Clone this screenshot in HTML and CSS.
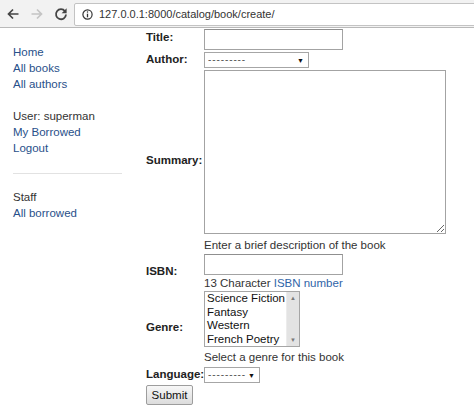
FILE: index.html
```html
<!DOCTYPE html>
<html lang="en">
<head>
<meta charset="utf-8">
<title>Create book</title>
<link rel="stylesheet" href="styles.css">
</head>
<body>
<div class="toolbar">
  <div class="nav-buttons">
    <svg class="nav-icon" width="14" height="14" viewBox="0 0 14 14"><path d="M12.5 7H2.5M7 2.5L2.5 7 7 11.5" fill="none" stroke="#444" stroke-width="1.7"/></svg>
    <svg class="nav-icon" width="14" height="14" viewBox="0 0 14 14"><path d="M1.5 7h10M7 2.5L11.5 7 7 11.5" fill="none" stroke="#c4c4c4" stroke-width="1.7"/></svg>
    <svg class="nav-icon" width="14" height="14" viewBox="0 0 14 14"><path d="M11 4.2A5 5 0 1 0 12 7.5" fill="none" stroke="#444" stroke-width="1.8"/><path d="M12.6 1.2v5h-5z" fill="#444"/></svg>
  </div>
  <div class="omnibox">
    <svg class="info-icon" width="11" height="11" viewBox="0 0 11 11"><circle cx="5.5" cy="5.5" r="4.6" fill="none" stroke="#333" stroke-width="1.2"/><path d="M5.5 4.7v3.6" stroke="#333" stroke-width="1.3"/><circle cx="5.5" cy="3.1" r="0.75" fill="#333"/></svg>
    <span class="url">127.0.0.1:8000/catalog/book/create/</span>
  </div>
</div>

<div class="page">
  <nav class="sidebar">
    <ul class="side-list">
      <li><a href="#">Home</a></li>
      <li><a href="#">All books</a></li>
      <li><a href="#">All authors</a></li>
    </ul>
    <ul class="side-list side-group">
      <li>User: superman</li>
      <li><a href="#">My Borrowed</a></li>
      <li><a href="#">Logout</a></li>
    </ul>
    <hr class="side-rule">
    <ul class="side-list">
      <li>Staff</li>
      <li><a href="#">All borrowed</a></li>
    </ul>
  </nav>

  <main class="content">
    <form class="book-form">
      <div class="row row-title">
        <label class="label" for="id_title">Title:</label>
        <div class="field"><input class="text-input" type="text" id="id_title"></div>
      </div>
      <div class="row row-author">
        <label class="label" for="id_author">Author:</label>
        <div class="field">
          <span class="select select-author"><select id="id_author"><option>---------</option></select><span class="arrow">▼</span></span>
        </div>
      </div>
      <div class="row row-summary">
        <label class="label" for="id_summary">Summary:</label>
        <div class="field">
          <textarea class="textarea" id="id_summary"></textarea>
          <div class="help help-summary">Enter a brief description of the book</div>
        </div>
      </div>
      <div class="row row-isbn">
        <label class="label" for="id_isbn">ISBN:</label>
        <div class="field">
          <input class="text-input" type="text" id="id_isbn">
          <div class="help">13 Character <a href="#" class="help-link">ISBN number</a></div>
        </div>
      </div>
      <div class="row row-genre">
        <label class="label" for="id_genre">Genre:</label>
        <div class="field">
          <span class="listbox">
            <select id="id_genre" multiple size="4">
              <option>Science Fiction</option>
              <option>Fantasy</option>
              <option>Western</option>
              <option>French Poetry</option>
            </select>
            <span class="scrollbar"><span class="sb-arrow">▲</span><span class="sb-arrow">▼</span></span>
          </span>
          <div class="help help-genre">Select a genre for this book</div>
        </div>
      </div>
      <div class="row row-language">
        <label class="label label-language" for="id_language">Language:</label>
        <div class="field">
          <span class="select select-language"><select id="id_language"><option>---------</option></select><span class="arrow">▼</span></span>
        </div>
      </div>
      <div class="row">
        <button type="button" class="submit">Submit</button>
      </div>
    </form>
  </main>
</div>
</body>
</html>
```

FILE: styles.css
```css
* { box-sizing: border-box; }

body {
  margin: 0;
  background: #fff;
  font-family: "Liberation Sans", Arial, sans-serif;
  font-size: 11.5px;
  line-height: 16px;
  color: #333;
}

/* browser chrome */
.toolbar {
  height: 28px;
  background: #f2f2f2;
  border-bottom: 1px solid #b9b9b9;
  display: flex;
  align-items: center;
  padding-top: 1px;
}

.nav-buttons {
  display: flex;
  align-items: center;
  gap: 10px;
  padding-left: 6px;
  width: 74px;
}

.nav-icon { display: block; }

.omnibox {
  flex: 1;
  height: 23px;
  margin-right: -6px;
  background: #fff;
  border: 1px solid #c3c3c3;
  border-radius: 2px;
  display: flex;
  align-items: center;
  padding-left: 7px;
  gap: 6px;
}

.info-icon { display: block; }

.url {
  font-size: 11px;
  color: #333;
}

/* page */
.page {
  display: flex;
}

.sidebar {
  width: 146px;
  flex: none;
  padding: 16px 0 0 13px;
}

.side-list {
  list-style: none;
  margin: 0;
  padding: 0;
}

.side-group {
  margin-top: 16px;
}

.side-list a {
  color: #28508a;
  text-decoration: none;
}

.side-rule {
  width: 109px;
  margin: 17px 0 15px;
  border: 0;
  border-top: 1px solid #e2e2e2;
  height: 0;
}

.content {
  flex: 1;
  padding-top: 1px;
}

.book-form {
  display: flex;
  flex-direction: column;
}

.row {
  display: flex;
  align-items: center;
  margin-bottom: 2px;
}

.row-summary { margin-bottom: 1px; }
.row-isbn { margin-bottom: 0; }

.label {
  width: 58px;
  flex: none;
  font-weight: bold;
  color: #222;
  margin-top: -3px;
}

.row-title .label { margin-top: -5px; }
.label-language { margin-top: -2px; }

.field {
  display: flex;
  flex-direction: column;
  align-items: flex-start;
}

.text-input {
  display: block;
  width: 139px;
  height: 21px;
  margin: 0;
  border: 1px solid #a3a3a3;
  border-top-color: #8f8f8f;
  background: #fff;
  font: inherit;
  padding: 1px 2px;
}

.textarea {
  display: block;
  width: 242px;
  height: 164px;
  margin: 0;
  border: 1px solid #a3a3a3;
  background: #fff;
  font: inherit;
  padding: 2px;
}

.help {
  line-height: 16px;
  color: #333;
}

.help-summary { margin-top: 3px; }
.help-genre { margin-top: 2px; }

.help-link {
  color: #2f64a8;
  text-decoration: none;
}

.select {
  display: inline-flex;
  align-items: center;
  height: 16px;
  border: 1px solid #a6a6a6;
  background: #fff;
  padding: 0 4px 0 3px;
}

.select select {
  appearance: none;
  -webkit-appearance: none;
  border: 0;
  background: transparent;
  padding: 0;
  margin: 0;
  flex: 1;
  min-width: 0;
  font-family: "Liberation Sans", Arial, sans-serif;
  font-size: 10px;
  letter-spacing: 0.9px;
  color: #555;
  height: 14px;
  line-height: 14px;
}

.select-author { width: 105px; }
.select-language { width: 56px; }

.arrow {
  font-size: 7px;
  color: #111;
  line-height: 1;
}

.listbox {
  display: inline-flex;
  width: 96px;
  height: 56px;
  border: 1px solid #a6a6a6;
  background: #fff;
}

.listbox select {
  flex: 1;
  min-width: 0;
  border: 0;
  margin: 0;
  padding: 0;
  height: 54px;
  overflow: hidden;
  font-family: "Liberation Sans", Arial, sans-serif;
  font-size: 11.5px;
  color: #111;
  background: #fff;
  outline: none;
}

.listbox option {
  padding: 0 1px 0 2px;
  line-height: 13.5px;
  min-height: 13.5px;
}

.scrollbar {
  width: 13px;
  flex: none;
  background: #e3e3e3;
  border-left: 1px solid #ececec;
  display: flex;
  flex-direction: column;
  justify-content: space-between;
  align-items: center;
  padding: 2px 0 2px;
}

.sb-arrow {
  font-size: 6px;
  line-height: 8px;
  color: #7a7a7a;
}

.submit {
  width: 47px;
  height: 20px;
  margin: 0;
  padding: 0;
  border: 1px solid #9d9d9d;
  border-radius: 2px;
  background: linear-gradient(#f7f7f7, #dcdcdc);
  font-family: "Liberation Sans", Arial, sans-serif;
  font-size: 11.5px;
  color: #111;
}
```
